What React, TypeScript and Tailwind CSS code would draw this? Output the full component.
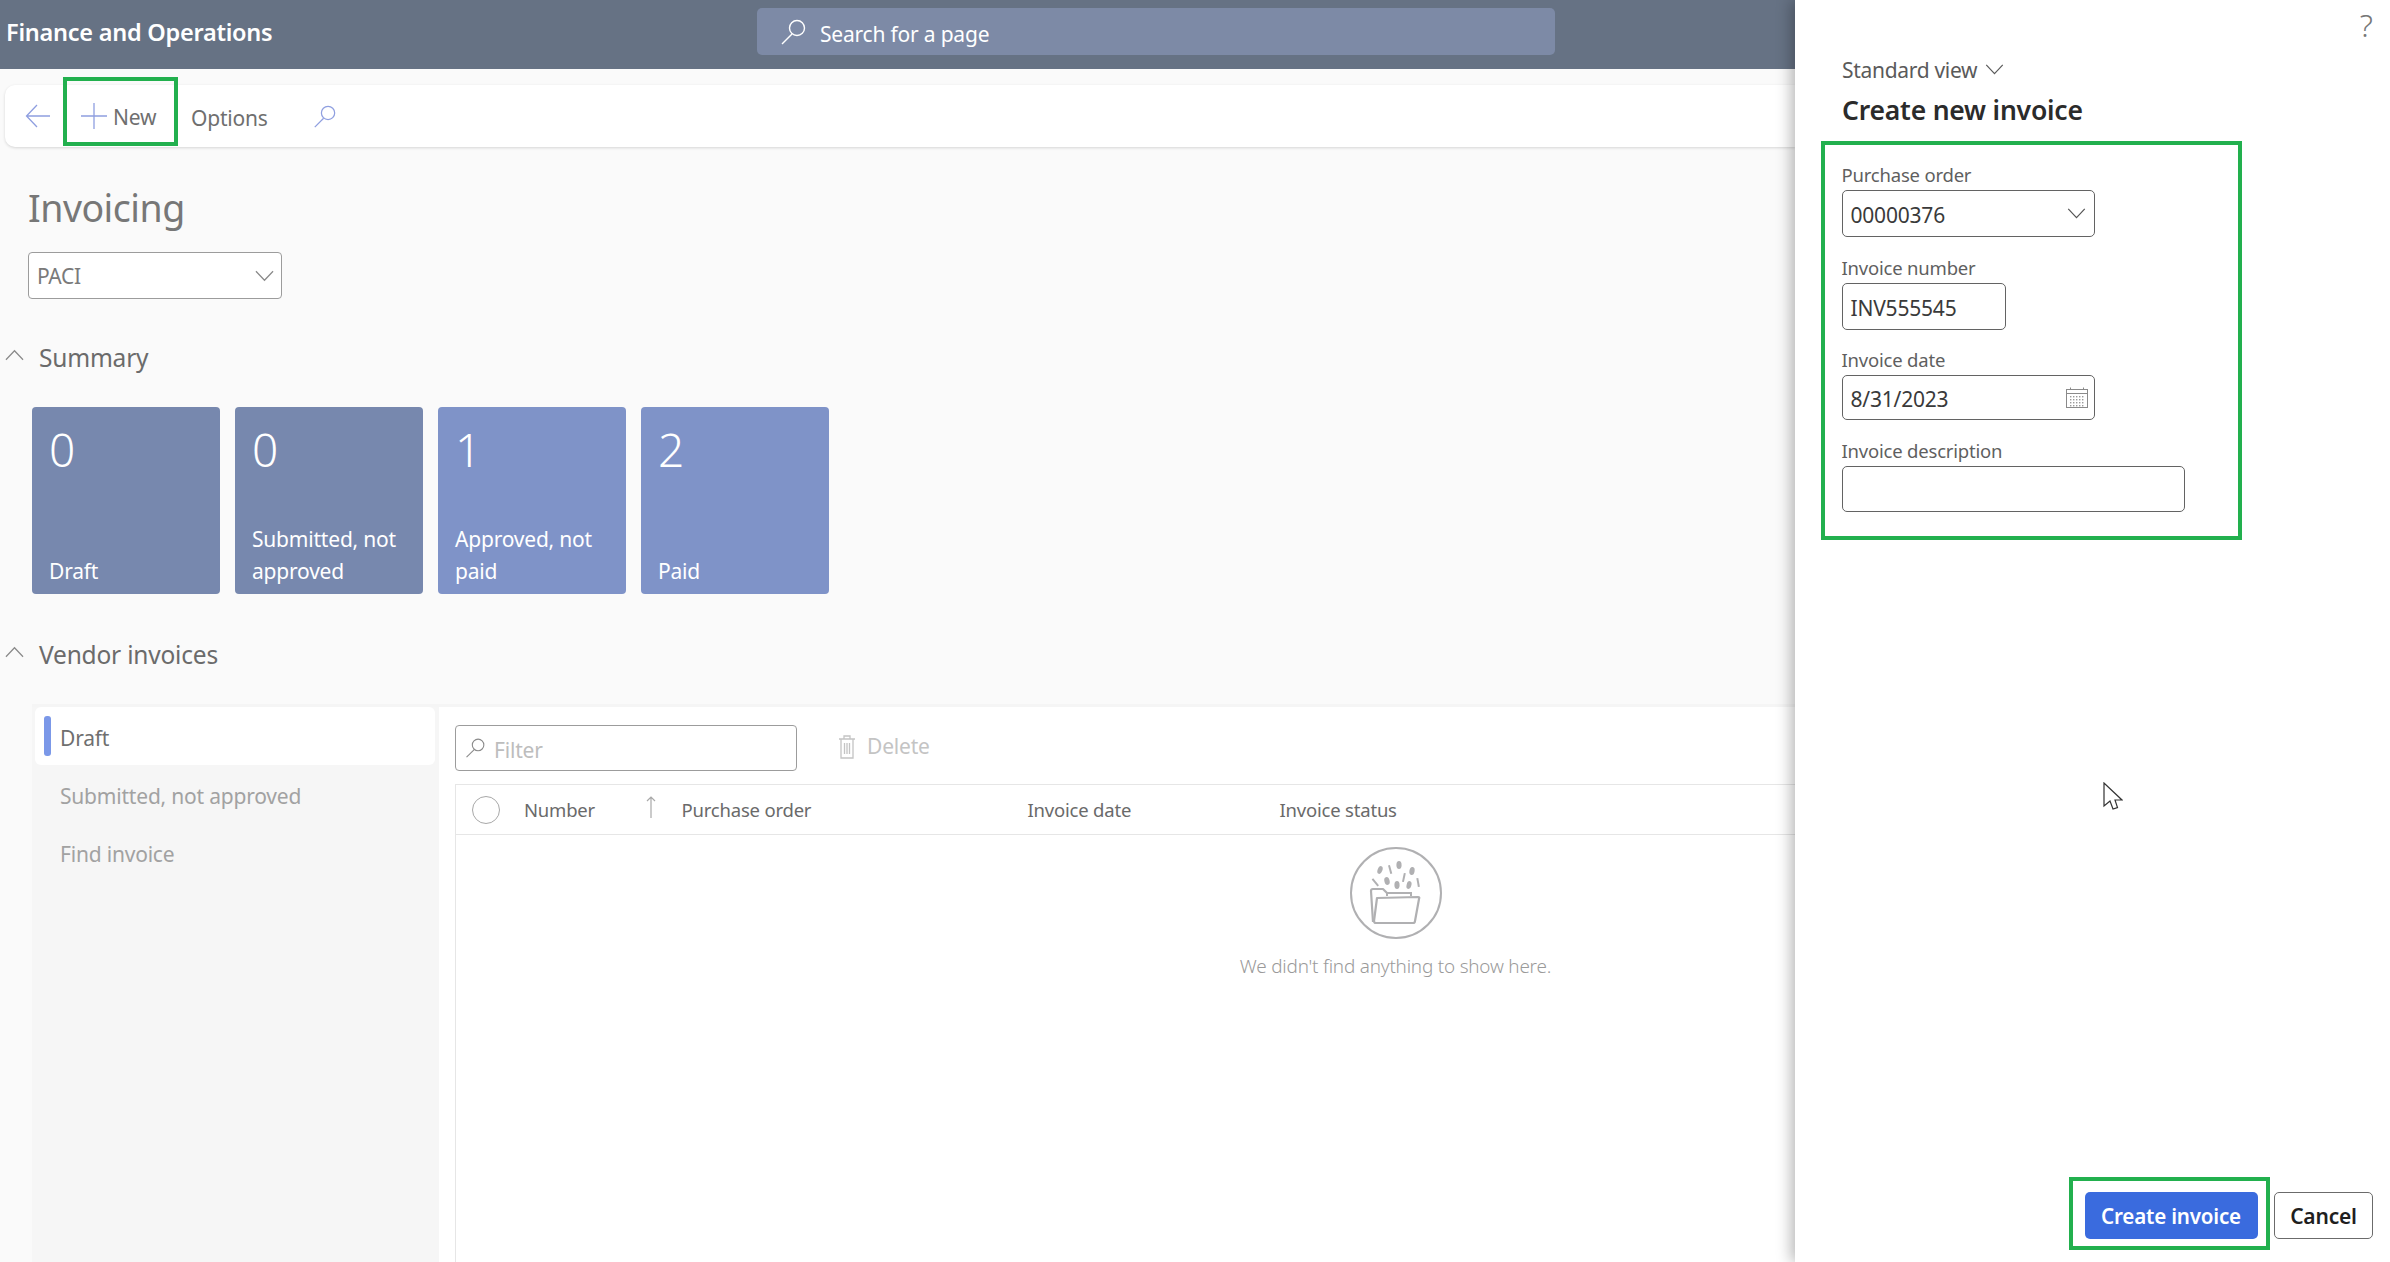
const FONT = "font-['Noto_Sans','Open_Sans',sans-serif]";

const SearchIcon = ({ className, color }: { className: string; color: string }) => (
  <svg viewBox="0 0 26 26" className={className} fill="none" stroke={color} strokeWidth="1.4">
    <circle cx="17" cy="9" r="7.5" />
    <path d="M12 15 L2 25" />
  </svg>
);

const Chevron = ({ className, color, up }: { className: string; color: string; up?: boolean }) => (
  <svg viewBox="0 0 20 12" className={className} fill="none" stroke={color} strokeWidth="1.3">
    <path d={up ? "M1 11 L10 1.5 L19 11" : "M1 1 L10 10.5 L19 1"} />
  </svg>
);

const tiles = [
  { value: "0", label: "Draft", bg: "bg-[#7788ae]" },
  { value: "0", label: "Submitted, not approved", bg: "bg-[#7788ae]" },
  { value: "1", label: "Approved, not paid", bg: "bg-[#7f93c8]" },
  { value: "2", label: "Paid", bg: "bg-[#7f93c8]" },
];

const SectionHeader = ({ title }: { title: string }) => (
  <div className="flex items-center h-[32px] pl-[5px]">
    <Chevron className="w-[19px] h-[12px] -mt-[6px]" color="#8a8a8a" up />
    <span className="ml-[15px] text-[24.5px] text-[#6b6b6b] tracking-[-0.2px]">{title}</span>
  </div>
);

const Tile = ({ value, label, bg }: { value: string; label: string; bg: string }) => (
  <div className={`w-[188px] h-[187px] rounded-[4px] ${bg} text-white pl-[17px] pr-[12px] flex flex-col justify-between`}>
    <div className="text-[46px] font-light leading-[56px] mt-[14px]">{value}</div>
    <div className="text-[21px] leading-[32px] mb-[7px] tracking-[-0.2px]">{label}</div>
  </div>
);

const Field = ({ label, mt, children }: { label: string; mt: string; children: React.ReactNode }) => (
  <div className={mt}>
    <div className="text-[18.5px] leading-[24px] text-[#5f5f5f] tracking-[-0.2px]">{label}</div>
    {children}
  </div>
);

const EmptyIcon = () => (
  <svg viewBox="0 0 94 92" className="w-[94px] h-[92px]" fill="none" stroke="#b0b0b2">
    <circle cx="47" cy="46" r="45" strokeWidth="2" />
    <path d="M24 75 L22 44 Q22 42 24 42 L34 42 L38 46 L44 46" strokeWidth="2.2" strokeLinejoin="round" />
    <path d="M28 51 L69 50 Q71 50 70 52 L66 74 Q66 76 64 76 L27 76 Q25 76 25 74 Z" strokeWidth="2.2" strokeLinejoin="round" />
    <path d="M38 49 L38 46 L62 46 L62 49" strokeWidth="2" />
    <g fill="#b0b0b2" stroke="none">
      <ellipse cx="31" cy="23" rx="2.4" ry="4" transform="rotate(20 31 23)" />
      <rect x="40" y="18" width="2" height="9" transform="rotate(-15 41 22)" />
      <ellipse cx="50" cy="18" rx="2.6" ry="4" />
      <ellipse cx="63" cy="24" rx="2.6" ry="4" transform="rotate(10 63 24)" />
      <rect x="54" y="26" width="2" height="9" transform="rotate(12 55 30)" />
      <rect x="25" y="31" width="2" height="9" transform="rotate(-40 26 35)" />
      <ellipse cx="38" cy="34" rx="2.6" ry="4" transform="rotate(-15 38 34)" />
      <ellipse cx="48" cy="38" rx="2.6" ry="4" />
      <ellipse cx="60" cy="38" rx="2.4" ry="4" transform="rotate(15 60 38)" />
      <rect x="68" y="31" width="2" height="9" transform="rotate(-10 69 35)" />
    </g>
  </svg>
);

const CalendarIcon = () => (
  <svg viewBox="0 0 22 21" className="w-[22px] h-[21px]" fill="none" stroke="#8a8a8a">
    <rect x="0.5" y="2.5" width="21" height="18" />
    <path d="M0.5 6.5 H21.5 M4.5 0.5 V3 M17.5 0.5 V3" />
    <g stroke="none" fill="#9a9a9a">
      {[9, 12, 15, 18].map((y) =>
        [4, 7, 10, 13, 16].map((x) => <rect key={`${x}-${y}`} x={x} y={y} width="1.4" height="1.4" />)
      )}
    </g>
  </svg>
);

const App = () => {
  return (
    <div className={`relative flex w-[2390px] h-[1262px] overflow-hidden bg-[#fafafa] ${FONT}`}>
      <main className="flex flex-col w-[1795px] h-full overflow-hidden">
        <header className="flex-none flex items-center h-[69px] bg-[#667284]">
          <div className="flex-none w-[757px] pl-[6px] text-[23.5px] font-semibold text-white tracking-[-0.25px] -mt-[4px]">Finance and Operations</div>
          <div className="flex-none flex items-center w-[798px] h-[47px] -mt-[6px] rounded-[5px] bg-[#7d8aa6] pl-[23px]">
            <SearchIcon className="w-[26px] h-[26px]" color="#ffffff" />
            <span className="ml-[14px] mt-[7px] text-[21px] text-white tracking-[-0.2px]">Search for a page</span>
          </div>
        </header>

        <div className="flex-none flex items-center h-[62px] mt-[16px] ml-[5px] bg-white rounded-l-[10px] shadow-[0_1px_3px_rgba(0,0,0,0.15)]">
          <svg viewBox="0 0 26 24" className="ml-[20px] w-[26px] h-[24px]" fill="none" stroke="#8f9fe0" strokeWidth="1.3">
            <path d="M12 1 L1.5 12 L12 23 M1.5 12 H25" />
          </svg>
          <button className="flex items-center self-start ml-[12px] w-[115px] h-[69px] -mt-[8px] pl-[14px] pt-[9px] border-[4.5px] border-[#22b04e] text-[21px] text-[#6f6f6f]">
            <svg viewBox="0 0 26 26" className="w-[26px] h-[26px]" fill="none" stroke="#8f9fe0" strokeWidth="1.3">
              <path d="M13 0 V26 M0 13 H26" />
            </svg>
            <span className="ml-[6px] mt-[3px] tracking-[-0.2px]">New</span>
          </button>
          <span className="ml-[13px] mt-[5px] text-[21px] text-[#6f6f6f] tracking-[-0.2px]">Options</span>
          <SearchIcon className="ml-[45px] w-[23px] h-[23px]" color="#8f9fe0" />
        </div>

        <h1 className="mt-[38px] ml-[28px] text-[37.5px] leading-[46px] text-[#777777] tracking-[-0.5px]">Invoicing</h1>
        <div className="flex items-center justify-between mt-[21px] ml-[28px] w-[254px] h-[47px] rounded-[4px] border border-[#9c9c9c] bg-white pl-[8px] pr-[7px]">
          <span className="mt-[2px] text-[21px] text-[#7a7a7a] tracking-[-0.3px]">PACI</span>
          <Chevron className="w-[19px] h-[12px]" color="#8a8a8a" />
        </div>

        <div className="mt-[43px]"><SectionHeader title="Summary" /></div>
        <div className="flex gap-[15px] mt-[33px] ml-[32px]">
          {tiles.map((tile) => (
            <Tile key={tile.label} {...tile} />
          ))}
        </div>

        <div className="mt-[45px]"><SectionHeader title="Vendor invoices" /></div>

        <div className="flex-1 flex mt-[33px] ml-[32px] min-h-0 border-t-[3px] border-[#f5f5f5]">
          <nav className="flex-none w-[407px] bg-[#f6f6f6] text-[21px] tracking-[-0.2px]">
            <div className="relative flex items-center h-[58px] ml-[3px] mr-[4px] pt-[6px] rounded-[6px] bg-white pl-[25px] text-[#6f6f6f]">
              <span className="absolute left-[9px] top-[9px] w-[7px] h-[40px] rounded-[3px] bg-[#7b98e8]" />
              Draft
            </div>
            <div className="flex items-center h-[58px] pt-[6px] pl-[28px] text-[#a2a2a2]">Submitted, not approved</div>
            <div className="flex items-center h-[57px] pt-[6px] pl-[28px] text-[#a2a2a2]">Find invoice</div>
          </nav>
          <section className="flex-none w-[1902px] bg-white pl-[16px] pt-[18px]">
            <div className="flex items-center h-[46px]">
              <div className="flex items-center w-[342px] h-[46px] rounded-[4px] border border-[#9c9c9c] pl-[9px]">
                <SearchIcon className="w-[20px] h-[20px]" color="#8a8a8a" />
                <span className="ml-[9px] mt-[5px] text-[21px] text-[#bdbdbd] tracking-[-0.2px]">Filter</span>
              </div>
              <svg viewBox="0 0 18 24" className="ml-[41px] w-[18px] h-[24px] -mt-[3px]" fill="none" stroke="#c4c4c4" strokeWidth="1.3">
                <path d="M1 4 H17 M6 4 V1 H12 V4 M3 4 V23 H15 V4 M6.5 8 V19 M9 8 V19 M11.5 8 V19" />
              </svg>
              <span className="ml-[11px] -mt-[3px] text-[21px] text-[#c4c4c4] tracking-[-0.2px]">Delete</span>
            </div>
            <div className="w-[1880px] h-[500px] mt-[13px] border-l border-t border-[#e6e6e6]">
              <div className="flex items-center h-[50px] border-b border-[#e6e6e6] text-[18.5px] text-[#6a6a6a] tracking-[-0.2px]">
                <span className="ml-[16px] w-[28px] h-[28px] rounded-full border border-[#a8a8a8]" />
                <span className="ml-[24px] w-[122px]">Number</span>
                <svg viewBox="0 0 10 22" className="w-[10px] h-[22px] -mt-[6px]" fill="none" stroke="#a9a9a9" strokeWidth="1.2">
                  <path d="M5 22 V1 M1 5 L5 1 L9 5" />
                </svg>
                <span className="ml-[25.5px] w-[346px]">Purchase order</span>
                <span className="w-[252px]">Invoice date</span>
                <span>Invoice status</span>
              </div>
              <div className="flex flex-col items-center pt-[12px]">
                <EmptyIcon />
                <p className="mt-[13px] text-[18.9px] font-light text-[#9a9a9a] tracking-[-0.2px]">We didn't find anything to show here.</p>
              </div>
            </div>
          </section>
        </div>
      </main>

      <aside className="relative z-10 flex-1 flex flex-col bg-white pl-[47px] pr-[17px] shadow-[-4px_0_14px_rgba(0,0,0,0.28)]">
        <div className="flex justify-end h-[40px] mt-[5px] text-[31px] font-light leading-[40px] text-[#777777]">?</div>
        <div className="flex items-center gap-[8px] mt-[9.5px] text-[21px] text-[#5a5a5a] tracking-[-0.3px]">
          Standard view
          <Chevron className="w-[19px] h-[11px] -mt-[2px]" color="#5a5a5a" />
        </div>
        <h2 className="mt-[5px] text-[26.5px] leading-[38px] font-semibold text-[#2b2b2b] tracking-[-0.2px]">Create new invoice</h2>

        <div className="flex-none -ml-[21px] mt-[12px] w-[421px] h-[399px] border-[4.5px] border-[#22b04e] pl-[16.5px] pt-[18px]">
          <Field label="Purchase order" mt="">
            <div className="flex items-center justify-between w-[253px] h-[47px] mt-[3px] rounded-[5px] border border-[#636363] pl-[8px] pr-[8px]">
              <span className="mt-[5px] text-[21px] text-[#3a3a3a] tracking-[-0.2px]">00000376</span>
              <Chevron className="w-[19px] h-[11px]" color="#555555" />
            </div>
          </Field>
          <Field label="Invoice number" mt="mt-[18.5px]">
            <div className="flex items-center w-[164px] h-[47px] mt-[3px] rounded-[5px] border border-[#636363] pl-[8px]">
              <span className="mt-[5px] text-[21px] text-[#3a3a3a] tracking-[-0.2px]">INV555545</span>
            </div>
          </Field>
          <Field label="Invoice date" mt="mt-[18px]">
            <div className="flex items-center justify-between w-[253px] h-[45px] mt-[3px] rounded-[5px] border border-[#636363] pl-[8px] pr-[6px]">
              <span className="mt-[5px] text-[21px] text-[#3a3a3a] tracking-[-0.2px]">8/31/2023</span>
              <CalendarIcon />
            </div>
          </Field>
          <Field label="Invoice description" mt="mt-[19px]">
            <div className="w-[343px] h-[46px] mt-[3px] rounded-[5px] border border-[#636363]" />
          </Field>
        </div>

        <div className="flex items-start mt-auto mb-[12px]">
          <div className="ml-[227px] flex items-start w-[201px] h-[73px] pl-[11.5px] pt-[10.5px] border-[4.5px] border-[#22b04e]">
            <button className="w-[173px] h-[47px] pt-[2px] rounded-[5px] bg-[#3a6bde] text-[20.6px] font-semibold text-white tracking-[-0.2px]">Create invoice</button>
          </div>
          <button className="ml-[4px] mt-[15px] w-[99px] h-[47px] pt-[2px] rounded-[5px] border border-[#6b6b6b] text-[21px] font-semibold text-[#1f1f1f] tracking-[-0.2px]">Cancel</button>
        </div>

        <svg viewBox="0 0 20 28" className="absolute left-[308px] top-[782px] w-[20px] h-[28px]" fill="#ffffff" stroke="#333333" strokeWidth="1.2">
          <path d="M1 1 V24 L7 19 L10 27 L14.5 25.5 L12 18 L19 18 Z" />
        </svg>
      </aside>
    </div>
  );
};

export default App;
